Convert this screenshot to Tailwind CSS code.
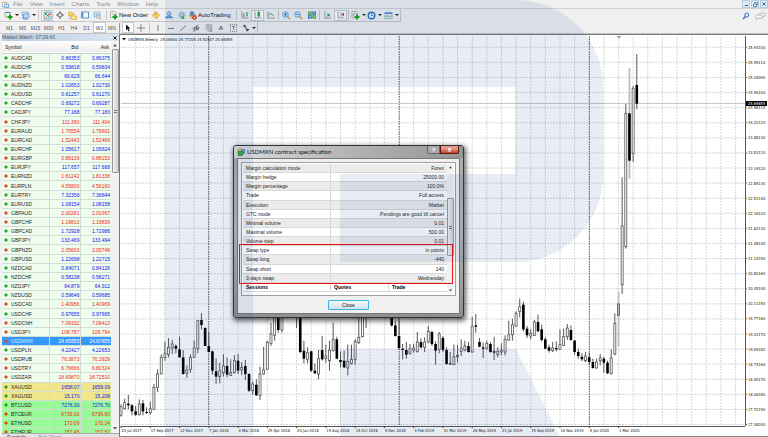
<!DOCTYPE html>
<html lang="en">
<head>
<meta charset="utf-8">
<meta name="viewport" content="width=device-width, initial-scale=1">
<title>USDMXN, Weekly</title>
<script src="https://cdn.jsdelivr.net/npm/@tailwindcss/browser@4"></script>
</head>
<body class="relative flex h-screen flex-col overflow-hidden bg-[#f0f0f0] font-['Liberation_Sans',sans-serif] text-[5px] leading-[8px] text-[#222]">

<!-- Menu bar -->
<header class="flex h-[9px] shrink-0 items-center border-b border-[#d2d2d2] text-[6px] text-[#8a8a8a]">
  <svg class="ml-[2px] h-[7px] w-[7px]" viewBox="0 0 14 14"><path d="M1 3h8v8H1z" fill="#fff" stroke="#4c86c4"/><path d="M5 6h8v7H5z" fill="#cfe3f7" stroke="#2f6bb0"/><path d="M1 3h8" stroke="#f0b040" stroke-width="2"/></svg>
  <nav class="ml-[4px] flex gap-[7px]">
    <a href="#">File</a><a href="#">View</a><a href="#">Insert</a><a href="#">Charts</a><a href="#">Tools</a><a href="#">Window</a><a href="#">Help</a>
  </nav>
  <div class="ml-auto flex h-[8px] gap-px">
    <button aria-label="Minimize" class="flex w-[8px] items-end justify-center border border-[#b4cde4] bg-[#dcebf9] pb-px"><span class="h-px w-[3px] bg-[#3c5a80]"></span></button>
    <button aria-label="Restore" class="flex w-[8px] items-center justify-center border border-[#b4cde4] bg-[#dcebf9]"><svg class="h-[5px] w-[5px]" viewBox="0 0 10 10" fill="none" stroke="#5a7190" stroke-width="1.5"><path d="M3 3V1h6v5H7M1 4h6v5H1z"/></svg></button>
    <button aria-label="Close window" class="flex w-[8px] items-center justify-center border border-[#b4cde4] bg-[#dcebf9]"><svg class="h-[4px] w-[4px]" viewBox="0 0 8 8" stroke="#4a6284" stroke-width="2"><path d="M1 1l6 6M7 1L1 7"/></svg></button>
  </div>
</header>

<!-- Standard toolbar -->
<div class="flex h-[13px] shrink-0 items-center">
  <div class="flex h-[13px] items-center border-r border-b border-[#c8c8c8] pl-[4px] text-[6px] text-[#111]">
    <button aria-label="New chart" class="flex w-[16px] items-center gap-[2px]"><svg class="h-[9px] w-[9px]" viewBox="0 0 18 18"><path d="M2 3h11v9H2z" fill="#e8f3ea" stroke="#6d8f73"/><path d="M2 3h11" stroke="#4a7ea8" stroke-width="2"/><path d="M12 7v10M7 12h10" stroke="#16a51c" stroke-width="4"/></svg><svg class="h-[2px] w-[4px]" viewBox="0 0 4 2"><path d="M0 0h4L2 2z" fill="#222"/></svg></button>
    <button aria-label="Profiles" class="flex w-[16px] items-center gap-[2px] pl-[1px]"><svg class="h-[9px] w-[9px]" viewBox="0 0 18 18"><path d="M2 2h12v8H2z" fill="#d8e8f8" stroke="#4b84c0"/><path d="M5 6h11v8H5z" fill="#bcd7f2" stroke="#3c76b5"/><path d="M3 12l2 4h9" stroke="#5b93cd" stroke-width="2" fill="none"/></svg><svg class="h-[2px] w-[4px]" viewBox="0 0 4 2"><path d="M0 0h4L2 2z" fill="#222"/></svg></button>
    <span class="mx-[2px] h-[10px] w-px bg-[#c8c8c8]"></span>
    <button aria-label="Market Watch" class="flex h-[11px] w-[12px] items-center justify-center border border-[#c3c8cc] bg-white"><svg class="h-[9px] w-[9px]" viewBox="0 0 18 18"><path d="M2 2h14v14H2z" fill="#eef6fb" stroke="#4b84b8" stroke-width="1.6"/><path d="M4 4l5 1-4 4z" fill="#20a030"/><path d="M5 5l8 8" stroke="#20a030" stroke-width="2"/><path d="M14 5l-4 4" stroke="#e0502a" stroke-width="3"/><path d="M8 10l-3 4" stroke="#e0802a" stroke-width="2"/></svg></button>
    <button aria-label="Data Window" class="flex w-[13px] justify-center"><svg class="h-[8px] w-[8px]" viewBox="0 0 16 16" fill="none" stroke="#555" stroke-width="1.6"><circle cx="8" cy="8" r="4.5"/><path d="M8 0v6M8 10v6M0 8h6M10 8h6"/></svg></button>
    <button aria-label="Navigator" class="flex w-[13px] justify-center"><svg class="h-[9px] w-[9px]" viewBox="0 0 18 18"><path d="M1 2h5l1 2h5v6H1z" fill="#f3d66a" stroke="#c79a22"/><path d="M7 8h4l1 2h5v7H7z" fill="#f7df80" stroke="#c79a22"/><path d="M3 11v4h3" stroke="#888" fill="none"/></svg></button>
    <button aria-label="Terminal" class="flex w-[12px] justify-center"><svg class="h-[8px] w-[8px]" viewBox="0 0 16 16"><path d="M1 2h14v12H1z" fill="#f6fbff" stroke="#3478b8" stroke-width="1.6"/><path d="M2 3h3v10H2z" fill="#5fa0dc"/></svg></button>
    <button aria-label="Strategy Tester" class="flex w-[13px] justify-center"><svg class="h-[9px] w-[9px]" viewBox="0 0 18 18"><path d="M2 2h12v10H2z" fill="#e4eef8" stroke="#5a8cc0"/><path d="M4 9V5M7 9V6M10 9V4" stroke="#3a70a8"/><circle cx="11" cy="11" r="3.5" fill="#cfe6fa" stroke="#777"/><path d="M13 13l4 4" stroke="#d39a2c" stroke-width="2"/></svg></button>
    <span class="mx-[2px] h-[10px] w-px bg-[#c8c8c8]"></span>
    <button class="flex w-[40px] items-center gap-px whitespace-nowrap"><svg class="h-[9px] w-[9px] shrink-0" viewBox="0 0 18 18"><path d="M3 1h8l3 3v9H3z" fill="#fff" stroke="#777"/><path d="M5 5h6M5 8h6" stroke="#888"/><path d="M12 7v10M7 12h10" stroke="#16a51c" stroke-width="4"/></svg>New Order</button>
    <button aria-label="MetaEditor" class="flex w-[13px] justify-center"><svg class="h-[8px] w-[8px]" viewBox="0 0 16 16"><path d="M7 1l8 7-6 7-8-5z" fill="#efbd3c" stroke="#b27c12"/><path d="M2 10l6 1 6-4" stroke="#fff2b8" stroke-width="1.5" fill="none"/></svg></button>
    <button aria-label="Market" class="flex w-[13px] justify-center"><svg class="h-[8px] w-[8px]" viewBox="0 0 16 16"><circle cx="8" cy="5" r="4" fill="#9cc8f0" stroke="#3f83c5"/><path d="M0 14q2-5 8-5t8 5z" fill="#5da4e2" stroke="#3f83c5"/></svg></button>
    <button aria-label="Signals" class="flex w-[13px] justify-center"><svg class="h-[8px] w-[8px]" viewBox="0 0 16 16" fill="none"><circle cx="8" cy="8" r="7" fill="#d6e4ee" stroke="#9db4c4"/><circle cx="8" cy="8" r="4" stroke="#3f92ba" stroke-width="1.5"/><path d="M8 8v8h5z" fill="#27a638"/></svg></button>
    <button class="flex w-[46px] items-center gap-px whitespace-nowrap"><svg class="h-[9px] w-[9px] shrink-0" viewBox="0 0 18 18"><path d="M2 9l7-4 7 4-7 7z" fill="#f0c03c" stroke="#b5851a"/><circle cx="8" cy="5" r="4" fill="#4f9ad8" stroke="#2f6ca8"/><circle cx="13" cy="13" r="4.5" fill="#e0331e"/><path d="M11.500 11.500h3v3h-3z" fill="#fff"/></svg>AutoTrading</button>
    <span class="mx-[2px] h-[10px] w-px bg-[#c8c8c8]"></span>
    <button aria-label="Bar chart" class="flex w-[12px] justify-center"><svg class="h-[8px] w-[8px]" viewBox="0 0 16 16" fill="none"><path d="M2 1v13h13" stroke="#777" stroke-width="1.4"/><path d="M6 5v7M12 2v9M10 4h2M12 9h2" stroke="#1b9a3a" stroke-width="1.8"/></svg></button>
    <button aria-label="Candlesticks" class="flex h-[11px] w-[13px] items-center justify-center border border-[#c3c8cc] bg-white"><svg class="h-[8px] w-[8px]" viewBox="0 0 16 16" fill="none"><path d="M2 1v13h13" stroke="#777" stroke-width="1.4"/><path d="M9 0v13" stroke="#1b9a3a"/><path d="M7 2h5v9H7z" fill="#1fae3a"/></svg></button>
    <button aria-label="Line chart" class="flex w-[13px] justify-center"><svg class="h-[8px] w-[8px]" viewBox="0 0 16 16" fill="none"><path d="M2 1v13h13" stroke="#777" stroke-width="1.4"/><path d="M3 9q4-8 10 1" stroke="#1b9a3a" stroke-width="1.6"/></svg></button>
    <span class="mx-px h-[10px] w-px bg-[#c8c8c8]"></span>
    <button aria-label="Zoom in" class="flex w-[12px] justify-center"><svg class="h-[9px] w-[9px]" viewBox="0 0 18 18"><path d="M11 11l5 5" stroke="#d3a02c" stroke-width="3"/><circle cx="7" cy="7" r="5.500" fill="#d5eafc" stroke="#3b8bd2" stroke-width="1.6"/><path d="M4 7h6M7 4v6" stroke="#2b70b8" stroke-width="1.6"/></svg></button>
    <button aria-label="Zoom out" class="flex w-[13px] justify-center"><svg class="h-[9px] w-[9px]" viewBox="0 0 18 18"><path d="M11 11l5 5" stroke="#d3a02c" stroke-width="3"/><circle cx="7" cy="7" r="5.500" fill="#d5eafc" stroke="#3b8bd2" stroke-width="1.6"/><path d="M4 7h6" stroke="#2b70b8" stroke-width="1.6"/></svg></button>
    <button aria-label="Tile windows" class="flex w-[13px] justify-center"><svg class="h-[8px] w-[8px]" viewBox="0 0 16 16"><path d="M0 1h7.500v6.500H0zM8.500 8.500H16V15H8.500z" fill="#3a9c34"/><path d="M8.500 1H16v6.500H8.500zM0 8.500h7.500V15H0z" fill="#2f68b4"/><path d="M1.500 4h4.500M10 4h4.500M1.500 11.500h4.500M10 11.500h4.500" stroke="#d8f0d8" stroke-width="2"/></svg></button>
    <span class="mx-px h-[10px] w-px bg-[#c8c8c8]"></span>
    <button aria-label="Auto scroll" class="flex w-[13px] justify-center"><svg class="h-[8px] w-[8px]" viewBox="0 0 16 16" fill="none"><path d="M2 1v13h13" stroke="#777" stroke-width="1.4"/><path d="M7 4l6 4-6 4z" fill="#1fae3a"/></svg></button>
    <button aria-label="Chart shift" class="flex h-[11px] w-[13px] items-center justify-center border border-[#c3c8cc] bg-white"><svg class="h-[8px] w-[8px]" viewBox="0 0 16 16" fill="none"><path d="M2 1v13h13M8 2v10" stroke="#777" stroke-width="1.4"/><path d="M14 3L9 7l5 4z" fill="#c8452a"/></svg></button>
    <span class="mx-px h-[10px] w-px bg-[#c8c8c8]"></span>
    <button aria-label="Indicators" class="flex w-[16px] items-center gap-[2px] pl-px"><svg class="h-[9px] w-[9px]" viewBox="0 0 18 18"><path d="M2 1h9l2 2v11H2z" fill="#eef3ee" stroke="#777"/><path d="M4 10q2-7 6-5" stroke="#555" fill="none"/><path d="M12 7v10M7 12h10" stroke="#16a51c" stroke-width="4"/></svg><svg class="h-[2px] w-[4px]" viewBox="0 0 4 2"><path d="M0 0h4L2 2z" fill="#222"/></svg></button>
    <button aria-label="Periods" class="flex w-[17px] items-center gap-[2px] pl-px"><svg class="h-[9px] w-[9px]" viewBox="0 0 18 18" fill="none"><circle cx="9" cy="9" r="6.500" fill="#eaf4ff" stroke="#2a72c4" stroke-width="3"/><path d="M9 5v4h3" stroke="#444" stroke-width="1.4"/></svg><svg class="h-[2px] w-[4px]" viewBox="0 0 4 2"><path d="M0 0h4L2 2z" fill="#222"/></svg></button>
    <button aria-label="Templates" class="flex w-[17px] items-center gap-[2px] pl-px"><svg class="h-[9px] w-[9px]" viewBox="0 0 18 18" fill="none"><path d="M1.500 3h15v12h-15z" fill="#e8f2fb" stroke="#5b8ec0"/><path d="M2 4.500h14" stroke="#4f8ac6" stroke-width="3"/><path d="M3 11q3-4 6-1t6-2" stroke="#d06a3a"/><path d="M3 13l5-3 7 2" stroke="#3c9a4a"/></svg><svg class="h-[2px] w-[4px]" viewBox="0 0 4 2"><path d="M0 0h4L2 2z" fill="#222"/></svg></button>
  </div>
  <div class="ml-auto flex items-center gap-[5px] pr-[2px]">
    <button aria-label="Search"><svg class="block h-[8px] w-[8px]" viewBox="0 0 16 16" fill="none" stroke="#3a68d0"><circle cx="9.500" cy="6" r="4" fill="#e8efff" stroke-width="2"/><path d="M7 9l-5 5" stroke-width="3"/></svg></button>
    <button aria-label="Chat"><svg class="block h-[8px] w-[11px]" viewBox="0 0 22 16" fill="#f2f2f2" stroke="#aaa" stroke-width="1.400"><rect x="8" y="2" width="13" height="7" rx="3.500"/><path d="M4 6h8q3 0 3 3.500T12 13H6l-3 2v-3q-2-1-2-3t3-3z"/></svg></button>
  </div>
</div>

<!-- Periods and drawing tools -->
<div class="flex h-[12px] shrink-0 items-center border-b border-[#c4c4c4]">
  <div class="flex h-[11px] items-center pl-[3px] text-[#555]">
    <button class="w-[13px]">M1</button><button class="w-[13px]">M5</button><button class="w-[13px]">M15</button><button class="w-[13px]">M30</button><button class="w-[13px]">H1</button><button class="w-[12px]">H4</button><button class="w-[13px]">D1</button><button class="h-[11px] w-[13px] border border-[#c3c8cc] bg-white">W1</button><button class="w-[12px]">MN</button>
  </div>
  <span class="mx-px h-[10px] w-px bg-[#999]"></span>
  <div class="flex h-[11px] items-center border-r border-[#c8c8c8] pl-px">
    <button aria-label="Cursor" class="flex h-[11px] w-[12px] items-center justify-center border border-[#c3c8cc] bg-white"><svg class="h-[8px] w-[6px]" viewBox="0 0 12 16"><path d="M2 1v12l3-3 2 5 2-1-2-5h4z" fill="#111"/></svg></button>
    <button aria-label="Crosshair" class="flex w-[14px] justify-center"><svg class="h-[8px] w-[8px]" viewBox="0 0 16 16" stroke="#666" stroke-width="1.500"><path d="M8 0v16M0 8h16"/></svg></button>
    <span class="mx-px h-[10px] w-px bg-[#c8c8c8]"></span>
    <button aria-label="Vertical line" class="flex w-[13px] justify-center"><svg class="h-[8px] w-[8px]" viewBox="0 0 16 16" stroke="#555" stroke-width="1.500"><path d="M8 2v12"/></svg></button>
    <button aria-label="Horizontal line" class="flex w-[13px] justify-center"><svg class="h-[8px] w-[8px]" viewBox="0 0 16 16" stroke="#555" stroke-width="1.500"><path d="M2 9h12"/></svg></button>
    <button aria-label="Trendline" class="flex w-[12px] justify-center"><svg class="h-[8px] w-[8px]" viewBox="0 0 16 16" stroke="#555" stroke-width="1.500"><path d="M2 14L14 3"/></svg></button>
    <button aria-label="Channel" class="flex w-[13px] justify-center"><svg class="h-[8px] w-[8px]" viewBox="0 0 16 16" stroke="#444" stroke-width="1.500"><path d="M1 10l12-8M3 15l12-8M4 13l2-7M8 11l2-7M12 13v-7"/></svg></button>
    <button aria-label="Fibonacci" class="flex w-[13px] justify-center"><svg class="h-[8px] w-[8px]" viewBox="0 0 16 16" stroke="#777" stroke-width="1.500"><path d="M1 2h14M1 6h14M1 10h14M5 14h7M13 11v5"/></svg></button>
    <button class="w-[12px] text-[6px] font-bold text-[#555]">A</button>
    <button aria-label="Text label" class="flex w-[13px] justify-center"><span class="h-[8px] w-[7px] border border-dotted border-[#888] text-[5px] leading-[6px]">T</span></button>
    <button aria-label="Arrows" class="flex w-[17px] items-center justify-center gap-[2px]"><svg class="h-[8px] w-[8px]" viewBox="0 0 16 16" fill="#444"><path d="M1 5l4-4 4 4H6l5 5h4l-4 5-4-3 2-1-5-6z"/></svg><svg class="h-[2px] w-[4px]" viewBox="0 0 4 2"><path d="M0 0h4L2 2z" fill="#222"/></svg></button>
  </div>
</div>

<main class="flex min-h-0 flex-1">
  <!-- Market Watch -->
  <aside class="flex w-[119px] shrink-0 flex-col pl-[2px]">
    <div class="flex h-[7px] shrink-0 items-center justify-between bg-linear-to-r from-[#b9cde0] to-[#dbe6f1] text-[#556] leading-[7px]">
      <h2>Market Watch: 07:29:43</h2>
      <button aria-label="Close Market Watch" class="mr-[2px]"><svg class="block h-[4px] w-[4px]" viewBox="0 0 8 8" stroke="#111" stroke-width="2"><path d="M1 1l6 6M7 1L1 7"/></svg></button>
    </div>
    <div class="flex min-h-0 flex-1 overflow-hidden border-b border-[#aaa]">
      <div class="min-w-0 flex-1">
        <table class="w-full table-fixed border-collapse">
          <colgroup><col class="w-[46px]"><col class="w-[31px]"><col class="w-[30px]"></colgroup>
          <thead><tr class="h-[12px] border-b border-[#ccc] bg-linear-to-b from-white to-[#ececec] text-[#222]"><th class="p-0 pl-[3px] text-left font-normal">Symbol</th><th class="p-0 pr-[2px] text-right font-normal">Bid</th><th class="p-0 pr-[2px] text-right font-normal">Ask</th></tr></thead>
        </table>
        <table class="h-[384px] w-full table-fixed border-separate border-spacing-0">
          <colgroup><col class="w-[46px]"><col class="w-[31px]"><col class="w-[30px]"></colgroup>
          <tbody id="quotes"></tbody>
        </table>
      </div>
      <div class="flex w-[8px] flex-col items-center justify-between bg-[#f2f2f2] py-[3px]">
        <svg class="h-[3px] w-[4px]" viewBox="0 0 4 3"><path d="M0 2.500L2 0l2 2.500z" fill="#555"/></svg>
        <div class="mt-[2px] mb-auto flex h-[124px] w-[7px] items-center justify-center rounded-[1px] border border-[#999] bg-linear-to-r from-[#f4f4f4] to-[#cfcfd2]"><span class="h-[3px] w-[3px] border-y border-[#777]"></span></div>
        <svg class="h-[3px] w-[4px]" viewBox="0 0 4 3"><path d="M0 0h4L2 2.500z" fill="#555"/></svg>
      </div>
    </div>
    <div class="flex h-[3px] shrink-0 gap-[12px] overflow-hidden bg-[#e4e4e4] pl-[5px] text-[#333]"><a href="#" class="-mt-px">Symbols</a><a href="#" class="-mt-px text-[#888]">Tick Chart</a></div>
  </aside>

  <!-- Chart window -->
  <section class="min-w-0 flex-1 border-t border-l border-[#777] bg-white">
    <svg id="chart" class="block h-full w-full" viewBox="120 35 648 402" preserveAspectRatio="xMinYMin meet" font-family="DejaVu Sans Condensed, Liberation Sans, sans-serif" font-size="4"></svg>
  </section>
</main>

<!-- Contract specification dialog -->
<div role="dialog" aria-labelledby="dlg" class="absolute top-[145px] left-[233px] flex h-[173px] w-[231px] flex-col rounded-[3px] border border-[#333] bg-linear-to-b from-[#a9a9a9] via-[#b8b8b8] to-[#8f8f8f] px-[3px] pb-[3px] shadow-[1px_2px_5px_1px_rgba(0,0,0,0.6)]">
  <div class="-mx-[3px] flex h-[12px] shrink-0 items-center rounded-t-[2px] bg-linear-to-r from-[#dcdcdc] via-[#b4b4b4] via-50% to-[#959595] px-[3px]">
    <svg class="h-[8px] w-[8px]" viewBox="0 0 16 16"><circle cx="6" cy="5" r="4" fill="#f0c060" stroke="#a66a20"/><path d="M9 3h6v8H9z" fill="#5a90d0" stroke="#2d5e9c"/><path d="M2 7h9v8H2z" fill="#28b03c" stroke="#107020"/></svg>
    <h1 id="dlg" class="ml-[2px] font-['Lato','Liberation_Sans',sans-serif] text-[6px] text-[#111]">USDMXN contract specification</h1>
    <div class="mr-[1px] mb-auto ml-auto flex h-[8px]">
      <button aria-label="Help" class="flex w-[13px] items-center justify-center rounded-bl-[2px] border border-t-0 border-[#666] bg-[#aaa] text-[6px] font-bold leading-[6px] text-white">?</button>
      <button aria-label="Close dialog" class="flex w-[19px] items-center justify-center rounded-br-[2px] border border-t-0 border-[#5d1a10] bg-linear-to-b from-[#e59a88] from-40% to-[#c4351c]"><svg class="h-[4px] w-[5px]" viewBox="0 0 10 8" stroke="#fff" stroke-width="2.200"><path d="M2 1l6 6M8 1L2 7"/></svg></button>
    </div>
  </div>
  <div class="flex min-h-0 flex-1 flex-col items-center border border-[#777] bg-[#f0f0f0] p-[3px]">
    <div class="relative flex h-[134px] w-full shrink-0 border border-[#a0a0a0] bg-white p-px">
      <div class="min-w-0 flex-1 overflow-hidden">
        <table class="h-[128px] w-full table-fixed border-separate border-spacing-0 leading-[8px] text-[#222]">
          <colgroup><col class="w-[88px]"><col class="w-[58px]"><col></colgroup>
          <tbody id="spec"></tbody>
        </table>
      </div>
      <div class="flex w-[7px] flex-col items-center justify-between bg-[#f2f2f2] py-[2px]">
        <svg class="h-[3px] w-[3px]" viewBox="0 0 4 3"><path d="M0 2.500L2 0l2 2.500z" fill="#333"/></svg>
        <div class="mt-[29px] mb-auto flex h-[58px] w-[7px] items-center justify-center rounded-[1px] border border-[#999] bg-linear-to-r from-[#f4f4f4] to-[#cfcfd2]"><span class="h-[3px] w-[3px] border-y border-[#777]"></span></div>
        <svg class="h-[3px] w-[3px]" viewBox="0 0 4 3"><path d="M0 0h4L2 2.500z" fill="#333"/></svg>
      </div>
      <div class="pointer-events-none absolute top-[81px] right-[2px] -left-[3px] h-[40px] border border-[#f01010]"></div>
    </div>
    <button class="mt-[4px] h-[10px] w-[41px] rounded-[1px] border border-[#3cb4dc] bg-linear-to-b from-[#f4f8fa] to-[#cfe3ee] leading-[8px] text-[#111]">Close</button>
  </div>
</div>

<!-- Translucent brand mark -->
<svg class="pointer-events-none absolute inset-0 h-full w-full" viewBox="0 0 768 437" preserveAspectRatio="xMidYMid slice" aria-hidden="true" fill="#1e50a0" fill-opacity="0.1">
  <path d="M165 0H516A87 87 0 0 1 603 87V175A87 87 0 0 1 516 262H340V174H515V87H253V437H165zM340 349H516L560 437H340z"/>
</svg>

<script>
const quotes = `AUDCAD 0.86353 0.86375 u
AUDCHF 0.59818 0.59834 u
AUDJPY 66.629 66.644 u
AUDNZD 1.02653 1.02730 u
AUDUSD 0.61257 0.61270 u
CADCHF 0.69272 0.69287 u
CADJPY 77.168 77.183 u
CHFJPY 111.390 111.404 d
EURAUD 1.76554 1.76601 d
EURCAD 1.52443 1.52469 d
EURCHF 1.05617 1.05624 u
EURGBP 0.88139 0.88153 d
EURJPY 117.657 117.668 u
EURNZD 1.81242 1.81338 d
EURPLN 4.55800 4.56160 d
EURTRY 7.32356 7.36844 u
EURUSD 1.08154 1.08158 u
GBPAUD 2.00281 2.00367 d
GBPCHF 1.19810 1.19839 d
GBPCAD 1.72928 1.72986 u
GBPJPY 133.469 133.494 u
GBPNZD 2.05603 2.05748 d
GBPUSD 1.22698 1.22715 u
NZDCAD 0.84071 0.84126 u
NZDCHF 0.58238 0.58271 u
NZDJPY 64.879 64.912 u
NZDUSD 0.59646 0.59685 u
USDCAD 1.40956 1.40969 d
USDCHF 0.97655 0.97665 u
USDCNH 7.09332 7.09413 d
USDJPY 108.787 108.794 d
USDMXN 24.65855 24.67855 d
USDPLN 4.22427 4.22653 u
USDRUB 76.3873 76.3929 d
USDTRY 6.76666 6.80324 d
USDZAR 18.69870 18.72510 d
XAUUSD 1658.07 1659.09 u
XAGUSD 15.170 15.208 u
BTCUSD 7276.30 7276.70 u
BTCEUR 6735.00 6739.60 d
ETHUSD 170.09 170.24 d
ETHEUR 157.45 157.52 d`.split("\n").map(r => r.split(" "));

document.getElementById("quotes").innerHTML = quotes.map(([s, bid, ask, dir]) => {
  let row = "bg-[#effdef]";
  if (s === "USDMXN") row = "bg-[#3399ff] text-[#d6eaff]";
  else if (s.startsWith("XA")) row = "bg-[#f0e68c]";
  else if (/^(BTC|ETH)/.test(s)) row = "bg-[#98fb98]";
  const ink = s === "USDMXN" ? "text-white" : dir === "u" ? "text-[#1010f0]" : "text-[#f82010]";
  const dot = dir === "u" ? "#22a722" : "#e0481c";
  const num = `border-b border-l border-[#d3ddd3] p-0 pr-px text-right ${ink}`;
  return `<tr class="${row}"><td class="border-b border-[#d3ddd3] p-0 pl-[2px] leading-[8px]"><span class="flex items-center gap-[3px]"><svg class="h-[4px] w-[4px]" viewBox="0 0 8 8"><path d="M4 0l4 4-4 4-4-4z" fill="${dot}"/></svg>${s}</span></td><td class="${num}">${bid}</td><td class="${num}">${ask}</td></tr>`;
}).join("");

const spec = [["Margin calculation mode","Forex"],["Margin hedge","25000.00"],["Margin percentage","100.0%"],["Trade","Full access"],["Execution","Market"],["GTC mode","Pendings are good till cancel"],["Minimal volume","0.01"],["Maximal volume","500.00"],["Volume step","0.01"],["Swap type","in points"],["Swap long","-440"],["Swap short","140"],["3-days swap","Wednesday"]];
document.getElementById("spec").innerHTML = spec.map(([k, v], i) =>
  `<tr class="${i % 2 ? "bg-white" : "bg-[#ececec]"}"><th scope="row" class="border-r border-b border-[#d8d8d8] p-0 pl-[3px] text-left font-normal">${k}</th><td colspan="2" class="border-b border-[#d8d8d8] p-0 pr-[3px] text-right">${v}</td></tr>`
).join("") + `<tr class="text-left text-black"><th class="border-r border-b border-[#d8d8d8] p-0 pl-[3px]">Sessions</th><th class="border-r border-b border-[#d8d8d8] p-0 pl-[3px]">Quotes</th><th class="border-b border-[#d8d8d8] p-0 pl-[3px]">Trade</th></tr>`;

/* Candles: index, high, body top, body bottom, low (thirds of a pixel below y=300), filled, optional wide grey wick */
const candles = `0 313 320 346 350 0|1 296 308 326 328 0|2 285 311 316 328 1|3 312 316 334 346 1|4 318 334 344 348 1|5 298 312 344 346 0|6 300 310 334 346 1|7 322 336 339 342 1|8 305 326 338 344 0|9 252 262 328 328 0|10 208 222 262 276 0|11 163 172 222 222 0|12 125 160 172 182 0|13 114 142 163 172 0|14 119 132 144 162 0|15 133 138 146 160 1|16 110 148 172 172 1|17 150 172 222 224 1|18 197 210 220 234 0|19 163 172 208 218 0|20 122 144 172 172 0|21 60 62 146 160 0|22 39 60 75 88 1|23 82 84 138 138 1|24 96 138 156 156 1|25 152 154 212 224 1|26 175 214 230 252 1|27 188 212 230 250 0|28 163 198 218 230 0|29 172 198 224 232 1|30 178 218 226 228 0|31 165 182 218 220 0|32 162 182 212 222 1|33 186 202 210 226 0|34 180 198 222 240 1|35 220 222 272 276 1|36 244 252 272 284 0|37 238 254 286 288 1|38 200 222 286 300 0|39 140 210 222 224 0|40 122 127 208 208 0|41 68 102 130 138 0|42 40 45 106 122 0|43 30 40 90 98 1|44 30 40 90 98 0|48 20 30 50 84 0|49 40 45 156 160 1|50 122 152 176 190 1|51 142 158 178 190 0|52 152 154 212 216 1|53 190 212 220 222 1|54 150 176 222 238 0|55 108 150 178 182 1|56 134 168 176 188 0|57 122 150 182 212 0|58 68 118 152 154 0|59 110 118 176 178 1|60 154 180 186 202 1|61 152 182 202 204 1|62 134 184 204 226 0|63 134 178 190 194 0|64 118 124 178 194 0|65 48 112 128 132 0|66 45 48 110 112 0|67 30 35 50 84 0|74 40 45 76 80 1|75 62 76 108 110 1|76 60 108 144 150 1|77 132 146 150 178 1|78 126 150 164 176 1|79 132 146 160 164 0|80 132 144 150 158 0|81 96 126 154 158 0|82 115 126 142 146 1|83 112 126 142 156 0|84 78 94 126 128 0|85 92 96 132 138 1|86 124 132 152 194 1|87 96 102 148 160 0|88 108 114 150 156 1|89 142 150 192 194 1|90 156 190 193 194 1|91 134 170 194 194 0|92 134 166 170 188 0|93 118 144 154 168 0|94 122 138 150 154 0|95 126 138 156 158 1|96 50 80 156 158 0|97 42 76 80 98 1|98 114 126 140 142 1|99 128 142 146 174 1|100 122 130 144 150 0|101 126 132 156 158 1|102 110 154 158 180 1|103 142 154 164 172 0|104 130 152 156 166 0|105 106 118 156 166 0|106 62 104 120 122 0|107 56 74 104 122 0|108 34 40 78 80 0|109 -4 20 34 52 0|110 5 14 88 94 1|111 78 86 106 114 1|112 88 100 108 118 0|113 60 66 106 108 0|114 44 66 94 96 1|115 74 88 120 124 1|116 112 118 146 148 1|117 134 142 152 158 1|118 126 144 152 156 0|119 124 144 148 154 1|120 88 134 148 150 0|121 86 110 136 138 0|122 72 84 110 120 0|123 76 90 120 122 1|124 120 122 156 164 1|125 146 156 168 176 1|126 160 170 178 184 1|127 156 168 182 186 0|128 158 172 186 196 1|129 176 186 204 206 1|130 176 186 204 206 0|131 162 174 182 196 0|132 170 176 188 218 1|133 182 188 220 222 1|134 148 174 220 224 0|135 40 70 162 166 0|136 -25 12 46 140 0 1|137 -368 -222 -46 -18 0|138 -588 -560 -160 -154 0|139 -696 -560 -418 -364 1 1|140 -642 -634 -440 -414 0|141 -738 -645 -589 -572 1`;
const dates = ["23 Jul 2017","17 Sep 2017","12 Nov 2017","7 Jan 2018","4 Mar 2018","29 Apr 2018","24 Jun 2018","19 Aug 2018","14 Oct 2018","9 Dec 2018","3 Feb 2019","31 Mar 2019","26 May 2019","21 Jul 2019","15 Sep 2019","10 Nov 2019","5 Jan 2020","1 Mar 2020"];
const prices = ["25.93100","25.59110","25.24090","24.90100","24.56110","24.22120","23.88130","23.53110","23.19120","22.85130","22.51140","22.16120","21.82130","21.48140","21.14150","20.80160","20.45140","20.11150","19.77160","19.43170","19.09180","18.74160","18.40170","18.06180","17.72190","17.38200"];
let g = "";
for (let k = 1; k < 43; k++) {
  const x = 121 + k * 14.633;
  g += `<path d="M${x} 36V426" stroke="#cdcdcd" stroke-width=".8" stroke-dasharray="2 1"/>`;
}
prices.forEach((p, k) => {
  const y = 47.3 + k * 15.09;
  g += `<path d="M121 ${y}H745" stroke="#cdcdcd" stroke-width=".8" stroke-dasharray="2 1"/><path d="M745 ${y}h2" stroke="#444" stroke-width=".8"/><text x="748" y="${y + 1.5}" fill="#111">${p}</text>`;
});
[208.7, 399.3, 589.4].forEach(x => g += `<path d="M${x} 36V426" stroke="#555" stroke-width=".9" stroke-dasharray="1.500 1"/>`);
g += `<path d="M121 103.500H745" stroke="#c4c8c8"/>`;
candles.split("|").forEach(c => {
  const [i, h, t, b, l, f, wide] = c.split(" ").map(Number);
  const x = 121 + i * 3.658, y = v => 300 + v / 3;
  g += wide ? `<path d="M${x} ${y(h)}V${y(l)}" stroke="#bdbdbd" stroke-width="1.800"/>` : `<path d="M${x} ${y(h)}V${y(l)}" stroke="#444" stroke-width=".9"/>`;
  const bh = Math.max((b - t) / 3, 1);
  g += f ? `<rect x="${x - 1.3}" y="${y(t)}" width="2.600" height="${bh}" fill="#000"/>` : `<rect x="${x - 1}" y="${y(t)}" width="2" height="${bh}" fill="${wide ? "#bbb" : "#fff"}" stroke="#555" stroke-width=".8"/>`;
});
g += `<path d="M745.500 36V426M121 426.500H745" stroke="#555" fill="none"/><path d="M120 436.500H768" stroke="#888"/><path d="M616.500 36h5l-2.500 3z" fill="#aaa"/>`;
dates.forEach((d, k) => {
  const x = 121 + k * 29.266;
  g += `<path d="M${x} 426v2" stroke="#444"/><text x="${x + .5}" y="432" fill="#111">${d}</text>`;
});
g += `<rect x="746" y="101" width="21" height="5" fill="#000"/><text x="748" y="105" fill="#fff">24.65855</text>`;
g += `<path d="M122 38h4l-2 2.500z" fill="#111"/><text x="128" y="41" fill="#111" xml:space="preserve">USDMXN,Weekly  25.06500 25.77205 24.52807 24.65855</text>`;
document.getElementById("chart").innerHTML = g;
</script>
</body>
</html>
